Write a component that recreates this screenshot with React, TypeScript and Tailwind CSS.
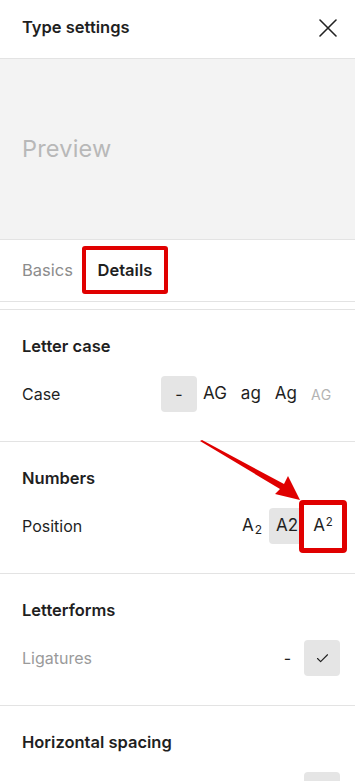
import { Check } from 'lucide-react'

const font = { fontFamily: 'Inter, "Noto Sans", sans-serif' }

function Section({ title, children }: { title: string; children: React.ReactNode }) {
  return (
    <section className="border-t border-[#e3e3e3] pl-[22px] pr-[15px] pt-[25px] pb-[29px]">
      <h2 className="h-[22px] leading-[22px] text-[16.5px] font-semibold text-[#1f1f1f]">{title}</h2>
      <div className="mt-[19px] h-[36px] flex items-center justify-between">{children}</div>
    </section>
  )
}

export default function App() {
  return (
    <div style={font} className="relative w-[355px] h-[781px] overflow-hidden bg-white text-[#1f1f1f]">
      {/* Header */}
      <header className="h-[59px] flex items-center justify-between pl-[22px] pr-[18px] pb-[3px] border-b border-[#e3e3e3]">
        <h1 className="text-[16.5px] font-semibold">Type settings</h1>
        <svg width="18" height="18" viewBox="0 0 18 18" fill="none" stroke="#222" strokeWidth="1.6" strokeLinecap="round">
          <path d="M1 1L17 17M17 1L1 17" />
        </svg>
      </header>

      {/* Preview */}
      <div className="h-[181px] bg-[#f3f3f3] border-b border-[#e3e3e3] flex items-center pl-[22px] pb-[1px]">
        <span className="text-[23.5px] text-[#b8b8b8] tracking-[0.2px]">Preview</span>
      </div>

      {/* Tabs */}
      <div className="h-[62px] border-b border-[#e3e3e3] flex items-center pl-[22px] pb-[1px]">
        <span className="text-[16.5px] text-[#8c8c8c]">Basics</span>
        <div className="ml-[9px] w-[86px] h-[48px] border-[4px] border-[#e00000] rounded-[3px] flex items-center justify-center">
          <span className="text-[16.5px] font-semibold text-[#1f1f1f]">Details</span>
        </div>
      </div>
      <div className="h-[7px]" />

      <Section title="Letter case">
        <span className="text-[16px]">Case</span>
        <div className="flex items-center mr-[7px]">
          <div className="w-[36px] h-[36px] rounded-[4px] bg-[#e5e5e5] flex items-center justify-center text-[16px]">-</div>
          <span className="ml-[6px] text-[17px]">AG</span>
          <span className="ml-[14px] text-[17px]">ag</span>
          <span className="ml-[14px] text-[17px]">Ag</span>
          <span className="ml-[14px] w-[22px] text-[14px] text-[#b3b3b3] tracking-[0.5px]">AG</span>
        </div>
      </Section>

      <Section title="Numbers">
        <span className="text-[16px]">Position</span>
        <div className="flex items-center mr-[-7px]">
          <span className="text-[17px]">
            A<span className="text-[12px] relative top-[3px] ml-[1px]">2</span>
          </span>
          <div className="ml-[7px] w-[36px] h-[36px] rounded-[4px] bg-[#e5e5e5] flex items-center text-[17px] pl-[7px]">A2</div>
          <div className="ml-[-6px] w-[48px] h-[53px] border-[5px] border-[#e00000] rounded-[4px] bg-white flex items-center justify-center text-[17px] relative z-10">
            <span>
              A<span className="text-[11.5px] relative top-[-5px] ml-[1px]">2</span>
            </span>
          </div>
        </div>
      </Section>

      <Section title="Letterforms">
        <span className="text-[16px] text-[#9a9a9a]">Ligatures</span>
        <div className="flex items-center">
          <span className="text-[16px] mr-[13px]">-</span>
          <div className="w-[36px] h-[36px] rounded-[4px] bg-[#e5e5e5] flex items-center justify-center">
            <Check size={15} strokeWidth={1.8} />
          </div>
        </div>
      </Section>

      <Section title="Horizontal spacing">
        <span className="text-[16px]"></span>
        <div className="w-[36px] h-[36px] rounded-[4px] bg-[#e5e5e5]" />
      </Section>

      {/* Annotation arrow */}
      <svg className="absolute left-0 top-0 pointer-events-none" width="355" height="781" viewBox="0 0 355 781">
        <polygon points="200,441 202,440 284,484 288,476 300,500 275,494 280,489" fill="#e00000" />
      </svg>
    </div>
  )
}
